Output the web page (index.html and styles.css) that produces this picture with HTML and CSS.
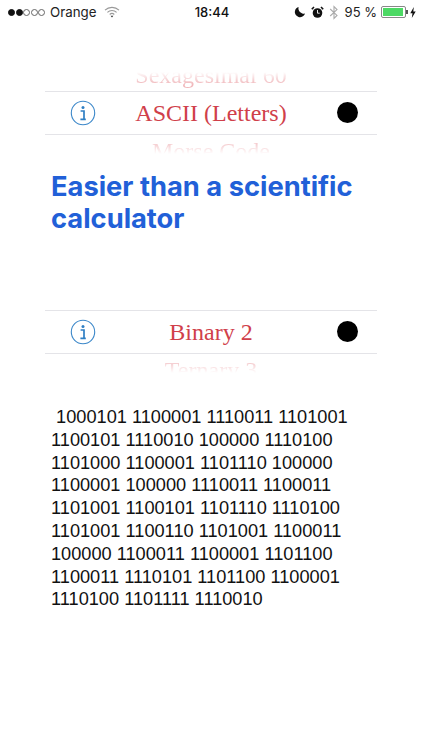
FILE: index.html
```html
<!DOCTYPE html>
<html lang="en">
<head>
<meta charset="utf-8">
<title>Base converter</title>
<link rel="stylesheet" href="styles.css">
</head>
<body>
<header class="status">
  <div class="status-left">
    <span class="signal"><i class="dot on"></i><i class="dot on"></i><i class="dot"></i><i class="dot"></i><i class="dot"></i></span>
    <span class="carrier">Orange</span>
    <svg class="wifi" viewBox="0 0 16 12" width="16" height="12"><path d="M1 4.2a10 10 0 0 1 14 0M3.4 6.4a6.6 6.6 0 0 1 9.2 0M5.7 8.5a3.4 3.4 0 0 1 4.6 0" fill="none" stroke="#999" stroke-width="1.1"/><path d="M6.6 9.8h2.8L8 11.4z" fill="#333"/></svg>
  </div>
  <div class="time">18:44</div>
  <div class="status-right">
    <svg class="moon" viewBox="0 0 12 12" width="12" height="12"><path d="M4.6 1a5.2 5.2 0 1 0 6.4 6.6A5.4 5.4 0 0 1 4.6 1z" fill="#111"/></svg>
    <svg class="alarm" viewBox="0 0 13 13" width="13" height="13"><circle cx="6.5" cy="7" r="4.8" fill="#111"/><path d="M6.5 4v3.2h2.2" fill="none" stroke="#fff" stroke-width=".9"/><path d="M.8 3.2 3 1M12.2 3.2 10 1" stroke="#111" stroke-width="1.6"/></svg>
    <svg class="bt" viewBox="0 0 10 15" width="10" height="15"><path d="M1.2 4 8 10.4 5 13.4V1.6L8 4.6 1.2 11" fill="none" stroke="#aaa" stroke-width="1.1"/></svg>
    <span class="pct">95 %</span>
    <span class="battery"><span class="level"></span></span>
    <svg class="bolt" viewBox="0 0 6 11" width="6" height="11"><path d="M3.8 0 .3 6.2h2.2L1.8 11l3.9-6.6H3.3z" fill="#111"/></svg>
  </div>
</header>

<main class="page">
  <section class="picker picker-first">
    <div class="ghost ghost-top"><span>Sexagesimal 60</span></div>
    <div class="row">
      <svg class="info" viewBox="0 0 26 26" width="26" height="26"><circle cx="13" cy="13" r="11.7" fill="none" stroke="#3b87c9" stroke-width="1.1"/><circle cx="13" cy="7.6" r="1.5" fill="#2f7fc4"/><path d="M10.6 11h3.4v8M10.4 19.4h5.4" fill="none" stroke="#2f7fc4" stroke-width="1.7"/></svg>
      <span class="value">ASCII (Letters)</span>
      <span class="knob"></span>
    </div>
    <div class="ghost ghost-bottom"><span>Morse Code</span></div>
  </section>

  <h1 class="headline">Easier than a scientific calculator</h1>

  <section class="picker picker-second">
    <div class="ghost ghost-top"></div>
    <div class="row">
      <svg class="info" viewBox="0 0 26 26" width="26" height="26"><circle cx="13" cy="13" r="11.7" fill="none" stroke="#3b87c9" stroke-width="1.1"/><circle cx="13" cy="7.6" r="1.5" fill="#2f7fc4"/><path d="M10.6 11h3.4v8M10.4 19.4h5.4" fill="none" stroke="#2f7fc4" stroke-width="1.7"/></svg>
      <span class="value">Binary 2</span>
      <span class="knob"></span>
    </div>
    <div class="ghost ghost-bottom"><span>Ternary 3</span></div>
  </section>

  <p class="output">&nbsp;1000101 1100001 1110011 1101001 1100101 1110010 100000 1110100 1101000 1100001 1101110 100000 1100001 100000 1110011 1100011 1101001 1100101 1101110 1110100 1101001 1100110 1101001 1100011 100000 1100011 1100001 1101100 1100011 1110101 1101100 1100001 1110100 1101111 1110010</p>
</main>
</body>
</html>
```

FILE: styles.css
```css
* { box-sizing: border-box; }
html, body { margin: 0; padding: 0; background: #fff; }
body { width: 422px; height: 750px; overflow: hidden; font-family: Inter, "Liberation Sans", sans-serif; color: #111; }

.status { display: grid; grid-template-columns: 1fr auto 1fr; align-items: center; height: 24px; padding: 0 6px 0 8px; font-size: 13px; color: #222; }
.status-left { display: flex; align-items: center; gap: 4px; }
.signal { display: flex; gap: .5px; }
.dot { width: 7px; height: 7px; border-radius: 50%; border: 1px solid #666; }
.dot.on { background: #111; border-color: #111; }
.carrier { font-size: 13.3px; margin-left: 1px; }
.wifi { margin-left: 4px; }
.time { font-weight: 500; font-size: 13px; color: #111; }
.status-right { display: flex; align-items: center; justify-content: flex-end; gap: 5px; }
.pct { font-size: 13px; margin-left: 1px; }
.battery { width: 25px; height: 12px; margin-left: -1px; border: 1px solid #888; border-radius: 2px; padding: 1px; position: relative; }
.battery::after { content: ""; position: absolute; right: -3px; top: 3px; width: 2px; height: 4px; background: #555; }
.level { display: block; height: 100%; width: 95%; background: #4cd964; }
.bolt { margin-left: -1px; }

.page { display: flex; flex-direction: column; }
.picker { width: 332px; margin-left: 45px; }
.picker-first { margin-top: 46px; }
.picker-second { margin-top: 54px; }
.ghost { height: 21px; overflow: hidden; text-align: center; font-family: "Liberation Serif", serif; font-size: 24px; color: #d8404a; line-height: 24px; }
.ghost span { display: block; opacity: .38; }
.ghost-top { -webkit-mask-image: linear-gradient(to top, #000 30%, transparent 90%); mask-image: linear-gradient(to top, #000 30%, transparent 90%); }
.ghost-top span { margin-top: -7px; }
.ghost-bottom { -webkit-mask-image: linear-gradient(to bottom, #000 20%, transparent 90%); mask-image: linear-gradient(to bottom, #000 20%, transparent 90%); }
.ghost-bottom span { margin-top: 4px; }

.row { display: grid; grid-template-columns: 52px 1fr 52px; align-items: center; height: 44px; border-top: 1px solid #e4e4e8; border-bottom: 1px solid #e4e4e8; }
.info { justify-self: center; margin-left: 24px; }
.value { text-align: center; font-family: "Liberation Serif", serif; font-size: 24px; color: #d0404a; }
.knob { width: 21px; height: 21px; border-radius: 50%; background: #000; justify-self: center; margin-right: 8px; margin-top: -2px; }

.headline { margin: 15px 0 0 51px; width: 330px; font-size: 27.3px; line-height: 32px; height: 64px; font-weight: 700; color: #2160d8; }
.output { margin: 31px 0 0 51px; width: 310px; font-family: "Liberation Sans", sans-serif; font-size: 18.2px; line-height: 22.8px; color: #111; }
```
